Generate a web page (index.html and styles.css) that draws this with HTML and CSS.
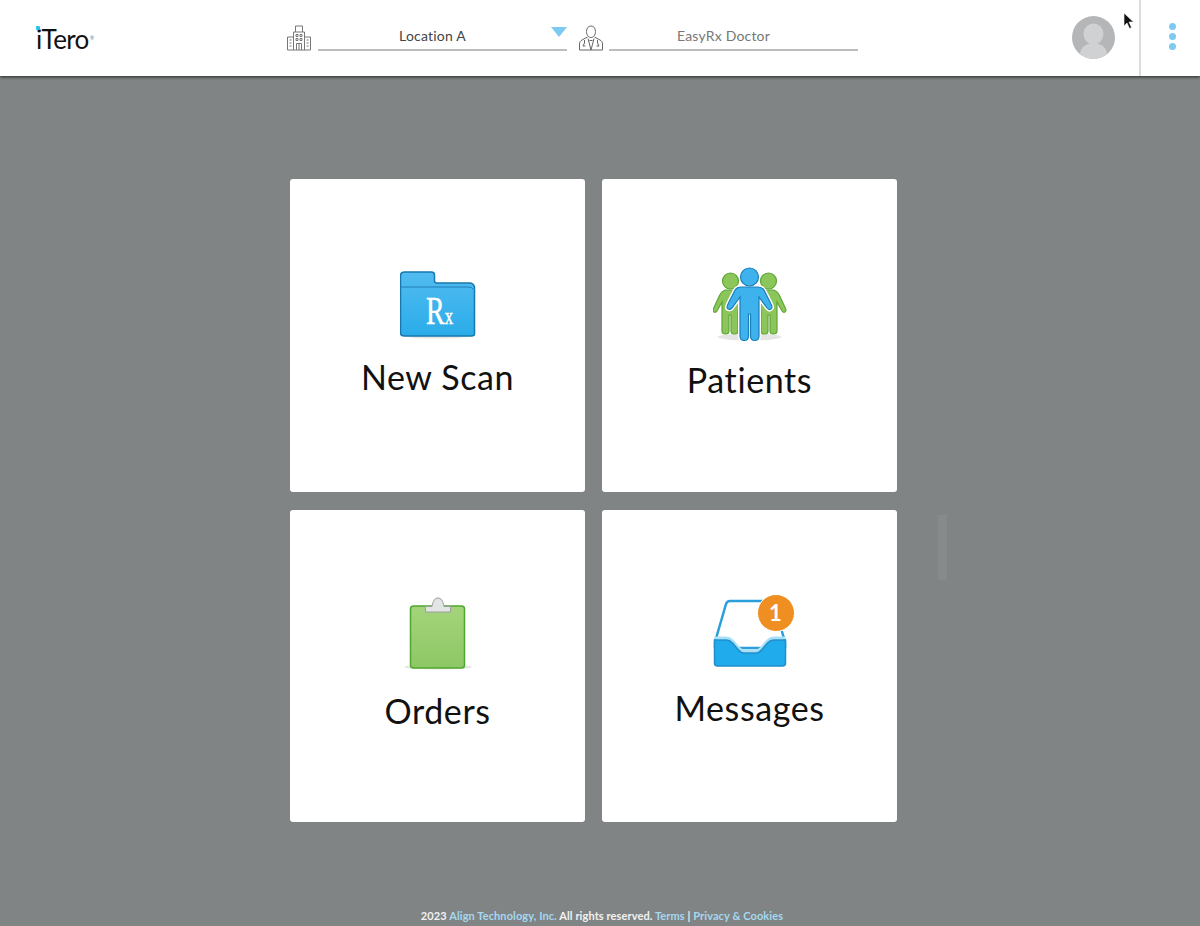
FILE: index.html
```html
<!DOCTYPE html>
<html lang="en">
<head>
  <meta charset="UTF-8">
  <title>iTero</title>
  <link rel="stylesheet" href="styles.css">
</head>
<body>

<header class="topbar">
  <div class="logo">iTero<span class="logo-dot"></span><span class="logo-reg">®</span></div>

  <div class="selectors">
    <svg class="field-icon" width="24" height="26" viewBox="0 0 24 26" fill="none" stroke="#777" stroke-width="1">
      <path d="M8.500 7V1h7v6"/>
      <path d="M6.500 25V7h11v18"/>
      <path d="M6.500 12H.5v13h23V12h-6"/>
      <path d="M9 9.500h2v2H9zM13 9.500h2v2h-2zM9 13.500h2v2H9zM13 13.500h2v2h-2z"/>
      <path d="M9.500 25v-6.500h5V25M12 18.500V25"/>
      <path d="M2.500 15h2M2.500 18h2M2.500 21h2M19.500 15h2M19.500 18h2M19.500 21h2"/>
    </svg>
    <div class="field field-location">
      <span>Location A</span>
      <span class="field-arrow"></span>
    </div>

    <svg class="field-icon doctor-icon" width="24" height="26" viewBox="0 0 24 26" fill="none" stroke="#666" stroke-width="1">
      <path d="M7.500 6.500C7.500 3 9.500 1 12 1s4.500 2 4.500 5.500-2 6-4.500 6-4.500-2.500-4.500-6z"/>
      <path d="M8.500 12 3 15c-1.500.8-2.500 2-2.500 4v6h23v-6c0-2-1-3.200-2.500-4l-5.500-3"/>
      <path d="M9 13.500 12 25l3-11.500M10.500 15.500h3"/>
      <path d="M5.500 15v3l-1.500 3M18.500 15v3l1.500 3M4 21h2.500M17.500 21H20"/>
    </svg>
    <div class="field field-doctor">
      <span>EasyRx Doctor</span>
    </div>
  </div>

  <svg class="avatar" width="43" height="43" viewBox="0 0 43 43">
    <defs><clipPath id="avatarClip"><circle cx="21.500" cy="21.500" r="21.500"/></clipPath></defs>
    <circle cx="21.500" cy="21.500" r="21.500" fill="#b4b6b7"/>
    <g clip-path="url(#avatarClip)" fill="#d0d1d2">
      <ellipse cx="21.500" cy="18" rx="10" ry="10.500"/>
      <path d="M8 43c-1-9 3-14 9-15h9c6 1 10 6 9 15z"/>
    </g>
  </svg>

  <svg class="cursor" width="12" height="18" viewBox="0 0 12 18">
    <path d="M1 1v13l3-3 2.500 5.500 2-1L6 10h4.500z" fill="#111" stroke="#fff" stroke-width=".6"/>
  </svg>

  <div class="menu-cell">
    <span class="menu-dot"></span>
    <span class="menu-dot"></span>
    <span class="menu-dot"></span>
  </div>
</header>

<main class="tiles">
  <a class="tile tile-scan">
    <svg width="76" height="68" viewBox="1 0 76 68">
      <defs>
        <linearGradient id="blueFill" x1="0" y1="0" x2="0" y2="1">
          <stop offset="0" stop-color="#52bcf0"/>
          <stop offset="1" stop-color="#2aace9"/>
        </linearGradient>
      </defs>
      <ellipse cx="38" cy="64" rx="36" ry="3.500" fill="#e4e6e6"/>
      <path d="M1.500 5q0-4 4-4h27q3 0 3 3v6q0 2 3 2h32q4 0 5 4v47q0 2-3 2H5.500q-4 0-4-3z" fill="url(#blueFill)" stroke="#1678ad" stroke-width="1.500"/>
      <path d="M1.500 16h67q5 0 5.500 2" fill="none" stroke="#1f7fb6" stroke-width="1"/>
      <text class="rx-text" transform="scale(.7 1)" x="38.600" y="53">R<tspan class="rx-x">x</tspan></text>
    </svg>
    <span class="tile-label">New Scan</span>
  </a>

  <a class="tile tile-patients">
    <svg width="74" height="75" viewBox="0 0 74 75">
      <ellipse cx="36.500" cy="70" rx="32" ry="3.500" fill="#e4e6e6"/>
      <g fill="#8cc65a" stroke="#5ea636" stroke-width="1.200">
        <circle cx="17.500" cy="14" r="8"/>
        <path d="M12 23h12l6 3-5 18v20q0 3-3.500 3t-3.500-3V48h-2v16q0 3-3.500 3T9 64V35l-5 9q-1.500 2-3 1t-.5-3.500l6-13q2-4 5.500-5.500z"/>
      </g>
      <g fill="#8cc65a" stroke="#5ea636" stroke-width="1.200" transform="matrix(-1 0 0 1 73 0)">
        <circle cx="17.500" cy="14" r="8"/>
        <path d="M12 23h12l6 3-5 18v20q0 3-3.500 3t-3.500-3V48h-2v16q0 3-3.500 3T9 64V35l-5 9q-1.500 2-3 1t-.5-3.500l6-13q2-4 5.500-5.500z"/>
      </g>
      <path d="M28 20h17q4 0 6 3l7 14q2 3.500 0 5t-4-1l-8-11v39q0 4.500-4.250 4.500T37.500 69V47h-2v22q0 4.500-4.250 4.500T27 69V30l-8 11q-2 2-4 1t0-5l7-14q2-3 6-3z" fill="none" stroke="#fff" stroke-width="4"/>
      <g fill="#3db2ec" stroke="#1a7fb8" stroke-width="1.200">
        <circle cx="36.500" cy="10" r="9"/>
        <path d="M28 20h17q4 0 6 3l7 14q2 3.500 0 5t-4-1l-8-11v39q0 4.500-4.250 4.500T37.500 69V47h-2v22q0 4.500-4.250 4.500T27 69V30l-8 11q-2 2-4 1t0-5l7-14q2-3 6-3z"/>
      </g>
    </svg>
    <span class="tile-label">Patients</span>
  </a>

  <a class="tile tile-orders">
    <svg width="70" height="74" viewBox="0 0 70 74">
      <defs>
        <linearGradient id="greenFill" x1="0" y1="0" x2="0" y2="1">
          <stop offset="0" stop-color="#a4d47a"/>
          <stop offset="1" stop-color="#8ec765"/>
        </linearGradient>
      </defs>
      <ellipse cx="35" cy="70" rx="34" ry="2.500" fill="#e4e6e6"/>
      <rect x="7.500" y="9" width="54" height="62" rx="3" fill="url(#greenFill)" stroke="#4fa82e" stroke-width="1.500"/>
      <path d="M22.500 15V9.500h6.500c1-6 3-8.500 6-8.500s5 2.500 6 8.500h6.500V15z" fill="#e3e4e4" stroke="#9a9c9d" stroke-width="1"/>
    </svg>
    <span class="tile-label">Orders</span>
  </a>

  <a class="tile tile-messages">
    <div class="inbox">
      <svg width="74" height="74" viewBox="0 0 74 74">
        <path d="M17 8h40q3 0 4 3l11 38v6H2v-6l11-38q1-3 4-3z" fill="#fff" stroke="#2a9fdc" stroke-width="2.500" stroke-linejoin="round"/>
        <path d="M1.500 45h12q3 0 6 3l6 7q2.500 3 6 3h11q3.500 0 6-3l6-7q3-3 6-3h12" fill="none" stroke="#a8e0f8" stroke-width="3"/>
        <path d="M1.500 47h12q3 0 6 3l6 7q2.500 3 6 3h11q3.500 0 6-3l6-7q3-3 6-3h12v23q0 3-3 3h-65q-3 0-3-3z" fill="#20abec" stroke="#1f8fcb" stroke-width="1.500"/>
      </svg>
      <span class="badge">1</span>
    </div>
    <span class="tile-label">Messages</span>
  </a>
</main>

<div class="scan-smudge"></div>

<footer class="footer">
  2023 <a>Align Technology, Inc.</a> All rights reserved. <a>Terms</a> | <a>Privacy &amp; Cookies</a>
</footer>

</body>
</html>
```

FILE: styles.css
```css
body {
  margin: 0;
  height: 926px;
  overflow: hidden;
  position: relative;
  background: #808484;
  font-family: "Lato", "Open Sans", sans-serif;
  display: flex;
  flex-direction: column;
}
.topbar {
  height: 76px;
  background: #fff;
  box-shadow: 0 1px 3px rgba(0, 0, 0, .7);
  display: flex;
  position: relative;
  flex-shrink: 0;
}
.logo {
  position: relative;
  width: 287px;
  flex-shrink: 0;
  padding-left: 36px;
  box-sizing: border-box;
  font-size: 26px;
  line-height: 78px;
  letter-spacing: -.6px;
  color: #111;
  height: 76px;
}
.logo-dot {
  position: absolute;
  left: 36px;
  top: 26px;
  width: 4px;
  height: 4px;
  background: #2cc4e8;
  border-radius: 1px;
}
.logo-reg {
  position: absolute;
  left: 90px;
  top: 36px;
  font-size: 5px;
  line-height: 5px;
  color: #777;
}
.selectors {
  width: 571px;
  display: flex;
  align-items: flex-start;
  flex-shrink: 0;
}
.field-icon {
  margin-top: 25px;
  flex-shrink: 0;
}
.field {
  position: relative;
  width: 249px;
  height: 51px;
  box-sizing: border-box;
  border-bottom: 2px solid #bdbdbd;
  padding: 27px 20px 0 0;
  text-align: center;
  font-size: 14px;
  line-height: 18px;
  letter-spacing: .2px;
}
.field-location {
  margin-left: 7px;
  color: #444;
}
.field-doctor {
  margin-left: 6px;
  color: #777;
}
.doctor-icon {
  margin-left: 12px;
}
.field-arrow {
  position: absolute;
  right: 0;
  top: 27px;
  border-left: 8px solid transparent;
  border-right: 8px solid transparent;
  border-top: 10px solid #7cc9f2;
}
.avatar {
  margin: 16px 0 0 214px;
  flex-shrink: 0;
}
.cursor {
  position: absolute;
  left: 1123px;
  top: 12px;
}
.menu-cell {
  position: absolute;
  right: 0;
  top: 0;
  width: 61px;
  height: 76px;
  box-sizing: border-box;
  border-left: 2px solid #dcdcdc;
  padding: 23px 0 0 28px;
  display: flex;
  flex-direction: column;
  gap: 3px;
}
.menu-dot {
  width: 7px;
  height: 7px;
  border-radius: 50%;
  background: #7cc9f2;
}
.tiles {
  display: grid;
  grid-template-columns: 295px 295px;
  grid-template-rows: 313px 312px;
  gap: 18px 17px;
  margin: 103px 0 0 290px;
}
.tile {
  background: #fff;
  border-radius: 3px;
  display: flex;
  flex-direction: column;
  align-items: center;
  color: #111;
}
.tile-scan { padding-top: 92px; }
.tile-patients { padding-top: 88px; }
.tile-orders { padding-top: 87px; }
.tile-messages { padding-top: 83px; }
.tile-label {
  font-size: 34px;
  line-height: 40px;
  letter-spacing: .6px;
}
.tile-scan .tile-label { margin-top: 18px; }
.tile-patients .tile-label { margin-top: 18px; }
.tile-orders .tile-label { margin-top: 20px; }
.tile-messages .tile-label { margin-top: 20px; }
.rx-text {
  font-family: "Liberation Serif", serif;
  font-size: 40px;
  fill: #fff;
  stroke: #fff;
  stroke-width: .5px;
}
.rx-x {
  font-size: 24px;
}
.inbox {
  position: relative;
  height: 75px;
}
.inbox svg {
  display: block;
}
.badge {
  position: absolute;
  left: 44px;
  top: 1px;
  width: 36px;
  height: 36px;
  border-radius: 50%;
  background: #ef8f22;
  border: 1px solid #fff;
  color: #fff;
  font-size: 22px;
  font-weight: 700;
  line-height: 36px;
  text-align: center;
}
.scan-smudge {
  position: absolute;
  left: 938px;
  top: 515px;
  width: 9px;
  height: 65px;
  background: #868a8a;
}
.footer {
  position: absolute;
  left: 0;
  right: 0;
  top: 909px;
  padding-left: 4px;
  text-align: center;
  font-size: 11px;
  line-height: 14px;
  font-weight: 700;
  letter-spacing: .1px;
  color: #f2f2f2;
}
.footer a {
  color: #a6d8f0;
}
```
